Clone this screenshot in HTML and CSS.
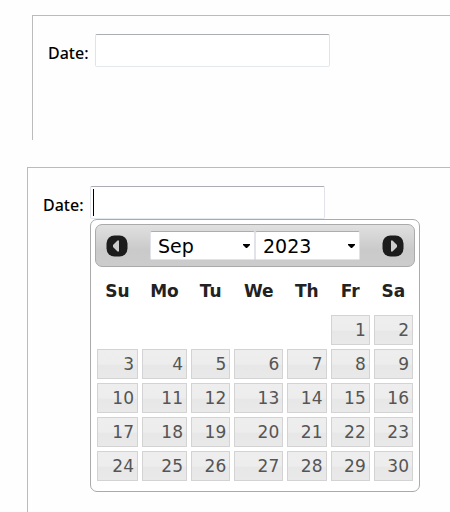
FILE: index.html
```
<!DOCTYPE html>
<html lang="en">
<head>
    <meta charset="UTF-8">
    <meta name="viewport" content="width=device-width, initial-scale=1.0">
    <title>Datepicker</title>
    <link rel="stylesheet" href="styles.css">
</head>
<body>
    <div class="demo demo-closed">
        <label for="date1">Date:</label>
        <div class="field">
            <input type="text" id="date1" class="date-input">
        </div>
    </div>

    <div class="demo demo-open">
        <label for="date2">Date:</label>
        <div class="field">
            <input type="text" id="date2" class="date-input active">
            <div class="datepicker">
                <div class="header">
                    <button type="button" class="nav" aria-label="Prev">
                        <svg width="22" height="22" viewBox="0 0 22 22">
                            <rect x="0.5" y="0.5" width="21" height="21" rx="8" fill="#1c1c1c"/>
                            <path d="M13 5.500v11h-1.500L7 12v-2l4.500-4.500z" fill="#ccc"/>
                        </svg>
                    </button>
                    <div class="selects">
                        <div class="select">
                            <select aria-label="Month">
                                <option>Sep</option>
                            </select>
                            <svg class="arrow" width="7" height="4" viewBox="0 0 7 4"><path d="M0 0h7v1L4 4H3L0 1z"/></svg>
                        </div>
                        <div class="select">
                            <select aria-label="Year">
                                <option>2023</option>
                            </select>
                            <svg class="arrow" width="7" height="4" viewBox="0 0 7 4"><path d="M0 0h7v1L4 4H3L0 1z"/></svg>
                        </div>
                    </div>
                    <button type="button" class="nav" aria-label="Next">
                        <svg width="22" height="22" viewBox="0 0 22 22">
                            <rect x="0.5" y="0.5" width="21" height="21" rx="8" fill="#1c1c1c"/>
                            <path d="M9 5.500v11h1.500L15 12v-2l-4.500-4.500z" fill="#ccc"/>
                        </svg>
                    </button>
                </div>
                <table class="calendar">
                    <colgroup>
                        <col class="col-su">
                        <col class="col-mo">
                        <col>
                        <col class="col-we">
                        <col>
                        <col>
                        <col>
                    </colgroup>
                    <thead>
                        <tr><th>Su</th><th>Mo</th><th>Tu</th><th>We</th><th>Th</th><th>Fr</th><th>Sa</th></tr>
                    </thead>
                    <tbody>
                        <tr>
                            <td></td><td></td><td></td><td></td><td></td>
                            <td><a href="#">1</a></td>
                            <td><a href="#">2</a></td>
                        </tr>
                        <tr>
                            <td><a href="#">3</a></td>
                            <td><a href="#">4</a></td>
                            <td><a href="#">5</a></td>
                            <td><a href="#">6</a></td>
                            <td><a href="#">7</a></td>
                            <td><a href="#">8</a></td>
                            <td><a href="#">9</a></td>
                        </tr>
                        <tr>
                            <td><a href="#">10</a></td>
                            <td><a href="#">11</a></td>
                            <td><a href="#">12</a></td>
                            <td><a href="#">13</a></td>
                            <td><a href="#">14</a></td>
                            <td><a href="#">15</a></td>
                            <td><a href="#">16</a></td>
                        </tr>
                        <tr>
                            <td><a href="#">17</a></td>
                            <td><a href="#">18</a></td>
                            <td><a href="#">19</a></td>
                            <td><a href="#">20</a></td>
                            <td><a href="#">21</a></td>
                            <td><a href="#">22</a></td>
                            <td><a href="#">23</a></td>
                        </tr>
                        <tr>
                            <td><a href="#">24</a></td>
                            <td><a href="#">25</a></td>
                            <td><a href="#">26</a></td>
                            <td><a href="#">27</a></td>
                            <td><a href="#">28</a></td>
                            <td><a href="#">29</a></td>
                            <td><a href="#">30</a></td>
                        </tr>
                    </tbody>
                </table>
            </div>
        </div>
    </div>
</body>
</html>
```
FILE: styles.css
```
* {
    box-sizing: border-box;
}
body {
    margin: 0;
    padding-top: 15px;
    background-color: #fefefe;
    font-family: "Noto Sans", "Open Sans", sans-serif;
    font-size: 16px;
    color: #000;
}
.demo {
    display: flex;
    align-items: flex-start;
    padding: 18px 0 0 15px;
    border-top: 1px solid #bbb;
    border-left: 1px solid #bbb;
}
.demo-closed {
    min-height: 125px;
    margin-left: 32px;
}
.demo-open {
    margin-top: 27px;
    margin-left: 27px;
    padding-bottom: 20px;
}
.demo label {
    width: 47px;
    padding-top: 8px;
    line-height: 22px;
    font-weight: 500;
}
.date-input {
    display: block;
    width: 235px;
    height: 33px;
    padding: 2px 4px;
    border: 1px solid #e2e3ea;
    border-top-color: #abadb3;
    border-bottom-color: #e3e9ef;
    border-radius: 2px;
    background-color: #fff;
    font-size: 19px;
}
/* text cursor */
.date-input.active {
    background-image: linear-gradient(#000, #000);
    background-size: 1px 27px;
    background-position: 2px center;
    background-repeat: no-repeat;
}
.datepicker {
    width: 330px;
    padding: 4px;
    border: 1px solid #aaa;
    border-radius: 7px;
    background-color: #fff;
    font-family: "DejaVu Sans", Verdana, sans-serif;
    font-size: 17px;
    color: #222;
}
.header {
    display: flex;
    justify-content: space-between;
    align-items: center;
    height: 43px;
    padding: 0 10px;
    border: 1px solid #aaa;
    border-radius: 7px;
    background: linear-gradient(#e0e0e0, #cacaca 60%, #cccccc);
}
.nav {
    width: 22px;
    height: 22px;
    padding: 0;
    border: none;
    background: none;
    cursor: pointer;
}
.nav svg {
    display: block;
}
.selects {
    display: flex;
}
.select {
    position: relative;
    width: 105px;
}
.select select {
    display: block;
    width: 100%;
    height: 29px;
    padding: 0 7px;
    border: 1px solid #e2e3ea;
    border-top-color: #abadb3;
    border-radius: 2px;
    appearance: none;
    background-color: #fff;
    font-family: inherit;
    font-size: 19px;
    color: #000;
}
.arrow {
    position: absolute;
    right: 5px;
    top: 13px;
    pointer-events: none;
}
.calendar {
    width: 100%;
    margin-bottom: 4px;
    border-collapse: collapse;
    table-layout: fixed;
}
.col-su {
    width: 45px;
}
.col-mo {
    width: 49px;
}
.col-we {
    width: 53px;
}
.calendar th {
    height: 46px;
    padding: 2px 0 0;
    font-weight: bold;
}
.calendar td {
    height: 34px;
    padding: 2px;
}
.calendar a {
    display: block;
    padding: 1px 3px 0;
    border: 1px solid #d3d3d3;
    background: linear-gradient(#eee, #ededed 50%, #e7e7e7 55%, #e9e9e9);
    line-height: 27px;
    text-align: right;
    text-decoration: none;
    color: #555;
}
```
